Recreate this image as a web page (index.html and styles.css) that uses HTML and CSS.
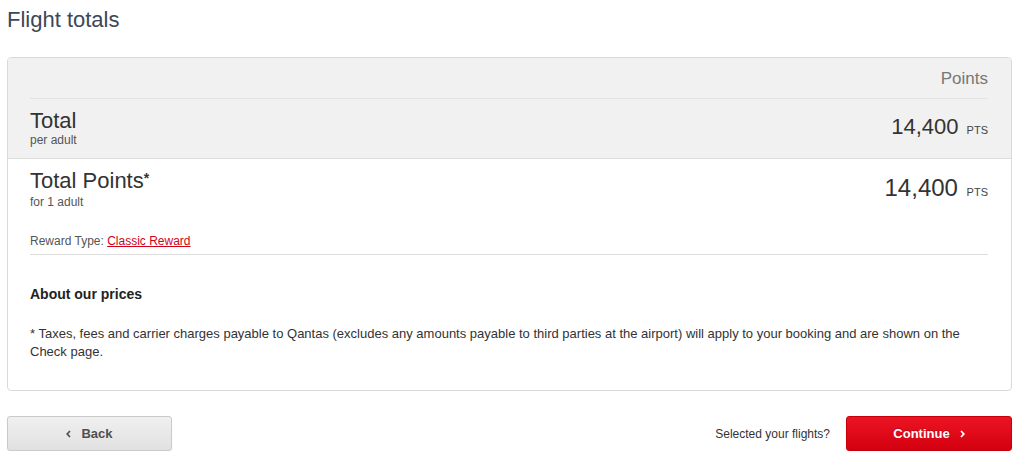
FILE: index.html
```html
<!DOCTYPE html>
<html lang="en">
<head>
<meta charset="utf-8">
<title>Flight totals</title>
<link rel="stylesheet" href="styles.css">
</head>
<body>
<div class="page">
  <h1 class="title">Flight totals</h1>
  <section class="card">
    <div class="card-head">
      <div class="col-label">Points</div>
      <div class="row row-total">
        <div class="label">
          <div class="label-main">Total</div>
          <div class="label-sub">per adult</div>
        </div>
        <div class="amount">14,400 <span class="unit">PTS</span></div>
      </div>
    </div>
    <div class="card-body">
      <div class="row row-points">
        <div class="label">
          <div class="label-main">Total Points<span class="ast">*</span></div>
          <div class="label-sub">for 1 adult</div>
        </div>
        <div class="amount amount-lg">14,400 <span class="unit">PTS</span></div>
      </div>
      <div class="reward">Reward Type: <a href="#" class="link">Classic Reward</a></div>
      <h2 class="about-title">About our prices</h2>
      <p class="about-text">* Taxes, fees and carrier charges payable to Qantas (excludes any amounts payable to third parties at the airport) will apply to your booking and are shown on the Check page.</p>
    </div>
  </section>
  <div class="actions">
    <button class="btn btn-back" type="button">
      <svg class="chev" width="5" height="8" viewBox="0 0 5 8"><path d="M4 1 L1.2 4 L4 7" fill="none" stroke="#555" stroke-width="1.8"/></svg>
      <span>Back</span>
    </button>
    <div class="actions-right">
      <span class="prompt">Selected your flights?</span>
      <button class="btn btn-continue" type="button">
        <span>Continue</span>
        <svg class="chev" width="5" height="8" viewBox="0 0 5 8"><path d="M1 1 L3.8 4 L1 7" fill="none" stroke="#fff" stroke-width="1.8"/></svg>
      </button>
    </div>
  </div>
</div>
</body>
</html>
```

FILE: styles.css
```css
* { box-sizing: border-box; }

body {
  margin: 0;
  background: #fff;
  font-family: "Liberation Sans", Arial, Helvetica, sans-serif;
  color: #333;
}

.page {
  padding: 7px 12px 0 7px;
}

.title {
  margin: 0;
  font-size: 22px;
  line-height: 26px;
  font-weight: normal;
  color: #3b4858;
}

.card {
  margin-top: 24px;
  border: 1px solid #dadada;
  border-radius: 4px;
  overflow: hidden;
}

.card-head {
  background: #f1f1f1;
  padding: 0 23px 0 22px;
  border-bottom: 1px solid #dedede;
}

.col-label {
  text-align: right;
  font-size: 17px;
  line-height: 20px;
  color: #777;
  padding: 11px 0 9px;
  border-bottom: 1px solid #e3e3e3;
}

.row {
  display: flex;
  justify-content: space-between;
}

.row-total {
  align-items: center;
  padding: 10px 0;
}

.label-main {
  font-size: 22px;
  line-height: 24px;
  color: #333;
}

.ast {
  font-size: 14px;
  font-weight: bold;
  line-height: 0;
  vertical-align: 5px;
}

.label-sub {
  font-size: 12px;
  line-height: 15px;
  color: #555;
}

.row-points .label-sub {
  margin-top: 2px;
}

.amount {
  font-size: 22px;
  line-height: 24px;
  color: #333;
  white-space: nowrap;
}

.amount-lg {
  font-size: 24px;
  line-height: 28px;
  padding-top: 5px;
}

.unit {
  font-size: 11px;
  margin-left: 2px;
  color: #444;
}

.card-body {
  padding: 10px 23px 29px 22px;
}

.reward {
  margin-top: 24px;
  padding-bottom: 5px;
  border-bottom: 1px solid #ddd;
  font-size: 12px;
  line-height: 15px;
  color: #555;
}

.link {
  color: #d0021b;
  text-decoration: underline;
}

.about-title {
  margin: 31px 0 0;
  font-size: 14px;
  line-height: 17px;
  font-weight: bold;
  color: #222;
}

.about-text {
  margin: 22px 0 0;
  font-size: 13px;
  line-height: 18px;
  color: #333;
}

.actions {
  margin-top: 25px;
  display: flex;
  justify-content: space-between;
  align-items: center;
}

.actions-right {
  display: flex;
  align-items: center;
  gap: 16px;
}

.prompt {
  font-size: 12px;
  color: #333;
}

.btn {
  height: 35px;
  width: 166px;
  border-radius: 3px;
  font-family: "Liberation Sans", Arial, Helvetica, sans-serif;
  font-size: 13px;
  font-weight: bold;
  display: flex;
  align-items: center;
  justify-content: center;
  gap: 10px;
  padding: 0;
  cursor: pointer;
}

.btn-back {
  width: 165px;
  background: linear-gradient(#f0f0f0, #e1e1e1);
  border: 1px solid #cacaca;
  color: #4f4f4f;
  box-shadow: 0 1px 1px rgba(0,0,0,0.08);
}

.btn-continue {
  background: linear-gradient(#ec1423, #d3000f);
  border: 1px solid #c8000c;
  color: #fff;
  text-shadow: 0 -1px 0 rgba(0,0,0,0.2);
  box-shadow: 0 1px 1px rgba(0,0,0,0.12);
}

.chev {
  display: block;
}
```
